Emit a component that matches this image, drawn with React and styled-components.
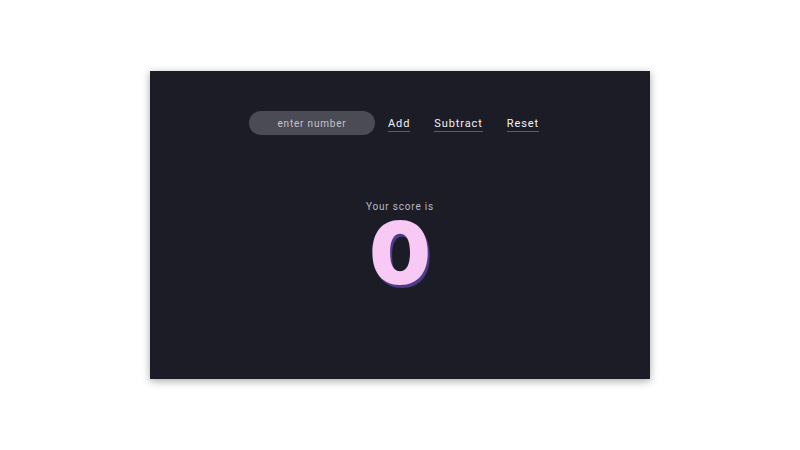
import React, { useState } from "react";
import styled, { createGlobalStyle } from "styled-components";

const GlobalStyle = createGlobalStyle`
  body {
    margin: 0;
    background: #ffffff;
    font-family: Roboto, "Liberation Sans", sans-serif;
  }
`;

export default function App() {
  const [value, setValue] = useState("");
  const [score, setScore] = useState(0);

  const num = () => Number(value) || 0;

  return (
    <Page>
      <GlobalStyle />
      <Panel>
        <Controls>
          <NumberInput
            placeholder="enter number"
            value={value}
            onChange={(e) => setValue(e.target.value)}
          />
          <Action onClick={() => setScore(score + num())}>Add</Action>
          <Action onClick={() => setScore(score - num())}>Subtract</Action>
          <Action onClick={() => setScore(0)}>Reset</Action>
        </Controls>
        <Score>
          <Label>Your score is</Label>
          <Value>{score}</Value>
        </Score>
      </Panel>
    </Page>
  );
}

const Page = styled.div`
  width: 800px;
  height: 450px;
  display: flex;
  justify-content: center;
  padding-top: 71px;
  box-sizing: border-box;
`;

const Panel = styled.div`
  width: 500px;
  height: 308px;
  background: #1c1c26;
  box-shadow: 0 2px 8px rgba(0, 0, 0, 0.35);
  display: flex;
  flex-direction: column;
  align-items: center;
  padding-top: 40px;
  box-sizing: border-box;
`;

const Controls = styled.div`
  display: flex;
  align-items: center;
  padding-right: 12px;
`;

const NumberInput = styled.input`
  width: 126px;
  height: 24px;
  box-sizing: border-box;
  border: none;
  outline: none;
  border-radius: 12px;
  background: #4b4b56;
  color: #e6e6ea;
  text-align: center;
  font-family: Roboto, "Liberation Sans", sans-serif;
  font-size: 10px;
  letter-spacing: 0.8px;
  margin-right: 13px;

  &::placeholder {
    color: #c4c4cc;
  }
`;

const Action = styled.button`
  background: none;
  border: none;
  border-bottom: 1px solid #5d5d6a;
  padding: 3px 0 1px;
  margin-right: 24px;
  color: #f2f2f5;
  font-family: Roboto, "Liberation Sans", sans-serif;
  font-size: 11px;
  letter-spacing: 0.9px;
  cursor: pointer;

  &:last-child {
    margin-right: 0;
  }
`;

const Score = styled.div`
  margin-top: 66px;
  display: flex;
  flex-direction: column;
  align-items: center;
`;

const Label = styled.div`
  color: #b9b9c2;
  font-size: 10px;
  line-height: 12px;
  letter-spacing: 0.8px;
`;

const Value = styled.div`
  color: #f9c9f6;
  font-family: Inter, Roboto, sans-serif;
  font-size: 86px;
  font-weight: 900;
  line-height: 80px;
  text-shadow: 2px 3px 0 #4b3d87;
`;
